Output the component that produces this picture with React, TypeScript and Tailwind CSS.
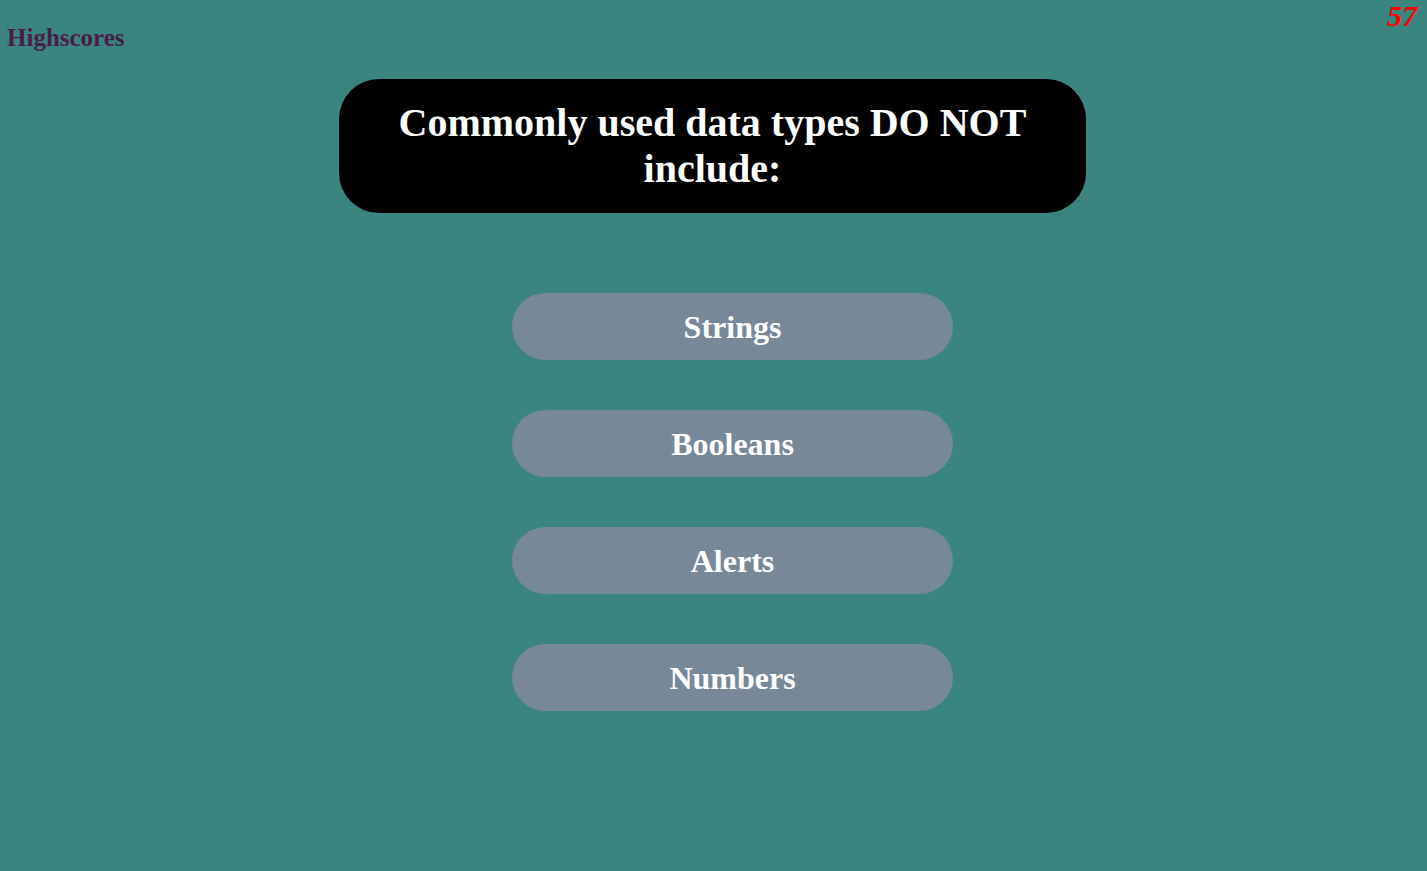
const answers = ["Strings", "Booleans", "Alerts", "Numbers"];

export default function App() {
  return (
    <div
      className="min-h-screen w-full bg-[#3a8580] text-white"
      style={{ fontFamily: '"Liberation Serif", "Times New Roman", serif' }}
    >
      {/* top bar */}
      <div className="flex items-start justify-between">
        <a className="ml-[7px] mt-[24px] text-[25px] leading-[28px] font-bold text-[#4a1c4a] cursor-pointer">
          Highscores
        </a>
        <span className="mr-[10px] mt-[1px] text-[30px] leading-none font-bold italic text-[#ff0000]">57</span>
      </div>

      {/* question */}
      <div className="mx-auto mt-[27px] w-[747px] -translate-x-[1px] rounded-[40px] bg-black px-8 pt-[21px] pb-[21px] text-center">
        <h1 className="text-[40px] leading-[46px] font-bold">Commonly used data types DO NOT include:</h1>
      </div>

      {/* answers */}
      <div className="mt-[80px] flex flex-col items-center gap-[50px] pl-[38px]">
        {answers.map((a) => (
          <button
            key={a}
            className="h-[67px] w-[441px] rounded-[34px] bg-[#778899] text-[32px] font-bold text-white"
            style={{ fontFamily: '"Liberation Serif", "Times New Roman", serif' }}
          >
            {a}
          </button>
        ))}
      </div>
    </div>
  );
}
